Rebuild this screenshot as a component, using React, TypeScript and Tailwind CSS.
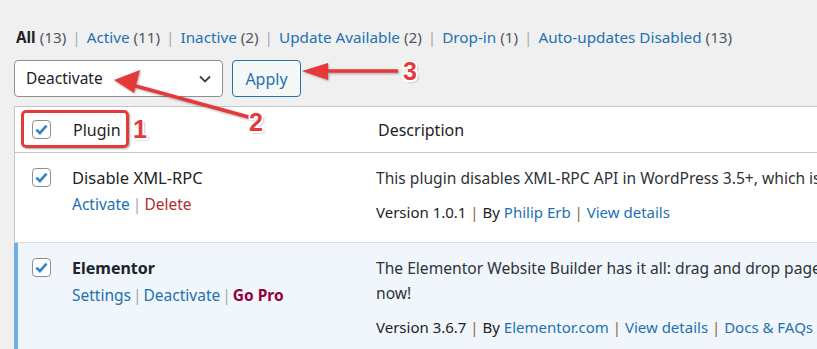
import React from "react";

function Check() {
  return (
    <span className="flex h-[19px] w-[19px] shrink-0 items-center justify-center rounded-[4px] border border-[#8c8f94] bg-white">
      <svg width="17" height="17" viewBox="0 0 17 17">
        <path d="M3.3 8.6l3.6 3.6 6.6-7.6" fill="none" stroke="#3582c4" strokeWidth="2.6" strokeLinejoin="miter" />
      </svg>
    </span>
  );
}

const Sep = () => <span className="mx-[6px] text-[#a7aaad]">|</span>;
const VSep = () => <span className="text-[#8a6a3c]">|</span>;

export default function App() {
  return (
    <div className="relative h-[349px] w-[817px] overflow-hidden bg-[#f0f0f1] font-['Noto_Sans',sans-serif] text-[#1d2327]">
      <div className="whitespace-nowrap pl-[16px] pt-[27px] text-[15.25px] leading-[20px]">
        <span className="font-bold">All</span> <span className="text-[#50575e]">(13)</span>
        <Sep />
        <span className="text-[#2271b1]">Active</span> <span className="text-[#50575e]">(11)</span>
        <Sep />
        <span className="text-[#2271b1]">Inactive</span> <span className="text-[#50575e]">(2)</span>
        <Sep />
        <span className="text-[#2271b1]">Update Available</span> <span className="text-[#50575e]">(2)</span>
        <Sep />
        <span className="text-[#2271b1]">Drop-in</span> <span className="text-[#50575e]">(1)</span>
        <Sep />
        <span className="text-[#2271b1]">Auto-updates Disabled</span> <span className="text-[#50575e]">(13)</span>
      </div>

      <div className="mt-[13px] flex gap-[9px] pl-[14px]">
        <div className="flex h-[37px] w-[209px] items-center justify-between rounded-[4px] border border-[#8c8f94] bg-white pl-[11px] pr-[10px] text-[15.5px]">
          <span>Deactivate</span>
          <svg width="14" height="14" viewBox="0 0 14 14">
            <path d="M2 4.5l5 5 5-5" fill="none" stroke="#3c434a" strokeWidth="1.8" />
          </svg>
        </div>
        <div className="flex h-[37px] w-[69px] items-center justify-center rounded-[4px] border border-[#2271b1] bg-[#f6f7f7] text-[16px] text-[#2271b1]">
          Apply
        </div>
      </div>

      <div className="ml-[14px] mt-[9px] border-t border-[#c3c4c7] bg-white text-[16px]">
        <div className="flex h-[46px] items-center border-b border-l border-[#c3c4c7]">
          <div className="w-[57px] shrink-0 pl-[17px]">
            <Check />
          </div>
          <div className="w-[304px] shrink-0 pl-[1px]">Plugin</div>
          <div className="min-w-0 flex-1 pl-[2px]">Description</div>
        </div>

        <div className="flex h-[90px] border-b border-l border-b-[#dcdcde] border-l-[#c3c4c7]">
          <div className="w-[57px] shrink-0 pl-[17px] pt-[15px]">
            <Check />
          </div>
          <div className="w-[304px] shrink-0 pt-[13px]">
            <div className="text-[16.5px] leading-[24px]">Disable XML-RPC</div>
            <div className="mt-[4px] text-[15.5px] leading-[20px]">
              <span className="text-[#2271b1]">Activate</span>
              <span className="mx-[3px] text-[#a7aaad]">|</span>
              <span className="text-[#b32d2e]">Delete</span>
            </div>
          </div>
          <div className="min-w-0 flex-1 overflow-hidden whitespace-nowrap pt-[13px] text-[15.6px]">
            <div className="leading-[24px] text-[#2c3338]">This plugin disables XML-RPC API in WordPress 3.5+, which is enabled by default.</div>
            <div className="mt-[10px] text-[15px] leading-[24px]">
              Version 1.0.1 <VSep /> By <span className="text-[#2271b1]">Philip Erb</span> <VSep />{" "}
              <span className="text-[#2271b1]">View details</span>
            </div>
          </div>
        </div>

        <div className="flex h-[110px] border-l-4 border-[#72aee6] bg-[#f0f6fc]">
          <div className="w-[54px] shrink-0 pl-[14px] pt-[15px]">
            <Check />
          </div>
          <div className="w-[304px] shrink-0 pt-[13px]">
            <div className="font-bold leading-[24px]">Elementor</div>
            <div className="mt-[5px] text-[15.5px] leading-[20px]">
              <span className="text-[#2271b1]">Settings</span>
              <span className="mx-[2px] text-[#a7aaad]">|</span>
              <span className="text-[#2271b1]">Deactivate</span>
              <span className="mx-[2px] text-[#a7aaad]">|</span>
              <span className="font-bold text-[#93003c]">Go Pro</span>
            </div>
          </div>
          <div className="min-w-0 flex-1 overflow-hidden whitespace-nowrap pt-[13px] text-[15.6px]">
            <div className="leading-[25px] text-[#2c3338]">
              The Elementor Website Builder has it all: drag and drop page builder, pixel perfect design,
              <br />
              now!
            </div>
            <div className="mt-[9px] text-[15px] leading-[24px]">
              Version 3.6.7 <VSep /> By <span className="text-[#2271b1]">Elementor.com</span> <VSep />{" "}
              <span className="text-[#2271b1]">View details</span> <VSep />{" "}
              <span className="text-[#2271b1]">Docs &amp; FAQs</span>
            </div>
          </div>
        </div>
      </div>

      {/* annotations */}
      <div className="pointer-events-none absolute left-[21px] top-[110px] h-[38px] w-[108px] rounded-[5px] border-[3px] border-[#e5393b] shadow-[1px_1px_2px_rgba(0,0,0,0.35)]" />
      <svg className="pointer-events-none absolute left-0 top-0" width="817" height="349">
        <defs>
          <filter id="sh" x="-10%" y="-10%" width="130%" height="130%">
            <feDropShadow dx="1" dy="1" stdDeviation="0.8" floodColor="#000" floodOpacity="0.35" />
          </filter>
        </defs>
        <g filter="url(#sh)" fill="#e5393b" stroke="#e5393b">
          <line x1="252" y1="118" x2="132" y2="85" strokeWidth="3.5" />
          <polygon points="114,80 140,70 134,93" stroke="none" />
          <line x1="398" y1="71" x2="322" y2="71" strokeWidth="3.5" />
          <polygon points="302,71 328,63 328,80" stroke="none" />
        </g>
      </svg>
      {[
        { t: "1", c: "left-[133px] top-[114px]" },
        { t: "2", c: "left-[249px] top-[107px]" },
        { t: "3", c: "left-[403px] top-[56px]" },
      ].map((n) => (
        <span
          key={n.t}
          className={`pointer-events-none absolute ${n.c} font-['Liberation_Sans',sans-serif] text-[25px] font-black leading-[30px] text-[#e5393b] [text-shadow:-1.5px_-1.5px_0_#fff,1.5px_-1.5px_0_#fff,-1.5px_1.5px_0_#fff,1.5px_1.5px_0_#fff,0_-1.5px_0_#fff,0_1.5px_0_#fff,-1.5px_0_0_#fff,1.5px_0_0_#fff,2px_2px_2px_rgba(0,0,0,0.4)]`}
        >
          {n.t}
        </span>
      ))}
    </div>
  );
}
